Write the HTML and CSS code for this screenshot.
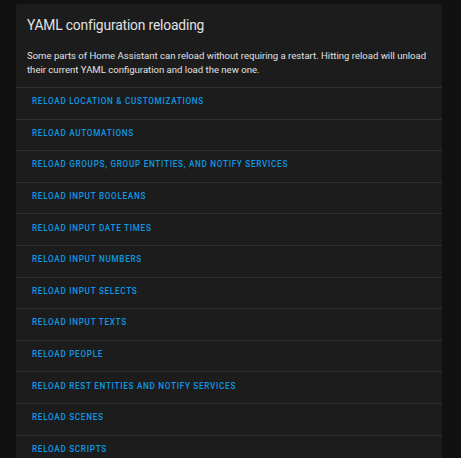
FILE: index.html
```html
<!DOCTYPE html>
<html>
<head>
<meta charset="utf-8">
<link rel="stylesheet" href="styles.css">
</head>
<body>
<div class="page">
  <div class="card">
    <div class="card-header"><span class="title">YAML configuration reloading</span></div>
    <div class="card-content">Some parts of Home Assistant can reload without requiring a restart. Hitting reload will unload their current YAML configuration and load the new one.</div>
    <div class="row"><span class="btn">Reload Location &amp; Customizations</span></div>
    <div class="row"><span class="btn">Reload Automations</span></div>
    <div class="row"><span class="btn">Reload Groups, Group Entities, and Notify Services</span></div>
    <div class="row"><span class="btn">Reload Input Booleans</span></div>
    <div class="row"><span class="btn">Reload Input Date Times</span></div>
    <div class="row"><span class="btn">Reload Input Numbers</span></div>
    <div class="row"><span class="btn">Reload Input Selects</span></div>
    <div class="row"><span class="btn">Reload Input Texts</span></div>
    <div class="row"><span class="btn">Reload People</span></div>
    <div class="row"><span class="btn">Reload Rest Entities and Notify Services</span></div>
    <div class="row"><span class="btn">Reload Scenes</span></div>
    <div class="row"><span class="btn">Reload Scripts</span></div>
    <div class="row"><span class="btn">Reload Template Entities</span></div>
    <div class="row"><span class="btn">Reload Timers</span></div>
  </div>
</div>
</body>
</html>
```

FILE: styles.css
```css
html, body {
  margin: 0;
  padding: 0;
  background: #111111;
  height: 100%;
  overflow: hidden;
}
.page {
  padding: 4px 19px 0 16px;
  font-family: Roboto, "Noto Sans", sans-serif;
}
.card {
  background: #1c1c1c;
  border-radius: 3px;
}
.card-header {
  font-size: 15.2px;
  line-height: 33.6px;
  letter-spacing: -0.012em;
  color: #e1e1e1;
  padding: 5px 11px 0 11px;
  height: 33.6px;
}
.title {
  display: inline-block;
  transform: scaleX(0.91);
  transform-origin: left center;
  white-space: nowrap;
}
.card-content {
  font-size: 9.55px;
  line-height: 14px;
  color: #e1e1e1;
  padding: 6.4px 11px 10px 11px;
}
.row {
  border-top: 1px solid #2f2f2f;
  height: 30.6px;
  padding-left: 16px;
  display: flex;
  align-items: flex-start;
}
.btn {
  display: inline-block;
  margin-top: 6.3px;
  font-size: 9.8px;
  line-height: 14px;
  font-weight: 500;
  letter-spacing: 0.0893em;
  text-transform: uppercase;
  color: #0f98e4;
  white-space: nowrap;
  transform: scaleX(0.83);
  transform-origin: left center;
}
```
